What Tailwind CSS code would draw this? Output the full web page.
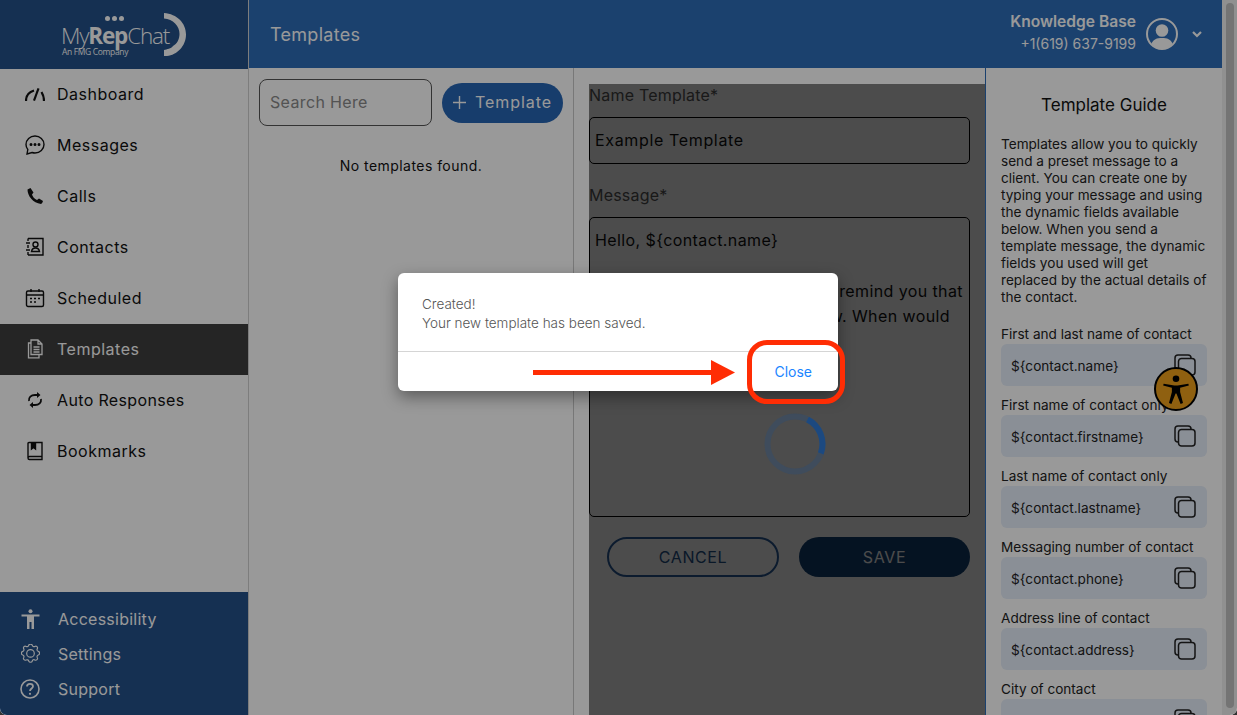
<!doctype html>
<html>
<head>
<meta charset="utf-8">
<script src="https://cdn.jsdelivr.net/npm/@tailwindcss/browser@4"></script>
</head>
<body class="w-[1237px] h-[715px] overflow-hidden bg-[#333] font-['Inter',sans-serif] text-black">
<div class="relative w-[1237px] h-[715px] overflow-hidden flex bg-white rounded-b-[7px]">
  <!-- sidebar -->
  <aside class="w-[249px] h-full shrink-0 flex flex-col bg-white border-r border-[#d0d0d0] font-['Inter',sans-serif]">
    <div class="h-[69px] shrink-0 bg-[#235089] flex items-center justify-center">
      <div class="relative w-[126px] h-[46px] text-white">
        <div class="absolute left-[0px] top-[12px] text-[22.5px] leading-[24px] tracking-[-1.2px] font-['Open_Sans',sans-serif] font-light whitespace-nowrap">My<span class="font-bold">Rep</span>Chat</div>
        <div class="absolute left-[1px] top-[35px] text-[8.5px] leading-[10px] tracking-[-0.35px] font-['Open_Sans',sans-serif] whitespace-nowrap">An FMG Company</div>
        <div class="absolute left-[44px] top-[4px] flex gap-[2px]"><span class="w-[5px] h-[5px] rounded-full bg-white"></span><span class="w-[5px] h-[5px] rounded-full bg-white"></span><span class="w-[5px] h-[5px] rounded-full bg-white"></span></div>
        <svg class="absolute left-[102px] top-[0px]" width="24" height="46" viewBox="0 0 24 46"><path d="M1 1 C14 2 23 11 23 22.5 C23 34 14 43 4 44 L1 44 L1 38 C4 37 8 37 10 34 C14 32 16.5 27 16.5 22 C16.5 14 10 7 1 6.5 Z" fill="#fff"/></svg>
      </div>
    </div>
    <nav class="flex-1 flex flex-col text-[16px] tracking-[0.5px]">
      <a class="h-[51px] pb-[2px] flex items-center pl-[25px] gap-[12px] text-[#111]"><svg class="w-[20px] h-[20px]" viewBox="0 0 20 20" fill="none" stroke="#111" stroke-width="2.2"><path d="M1 17 C1 12 4 8 9 6.5 M16.5 8 C18 10.5 19 13.5 19 17"/><path d="M12.5 4 L14.5 4.8 L10 17 L8 16.2 Z" fill="#111" stroke="none"/></svg><span>Dashboard</span></a>
      <a class="h-[51px] pb-[2px] flex items-center pl-[25px] gap-[12px] text-[#111]"><svg class="w-[20px] h-[20px]" viewBox="0 0 20 20" fill="none" stroke="#111" stroke-width="1.4"><path d="M10 1 C5 1 1 4.8 1 9.5 C1 11.5 1.7 13.2 2.8 14.5 L2 19 L7 17.5 C8 17.8 9 18 10 18 C15 18 19 14.2 19 9.5 C19 4.8 15 1 10 1 Z"/><circle cx="6" cy="9.5" r=".8" fill="#111"/><circle cx="10" cy="9.5" r=".8" fill="#111"/><circle cx="14" cy="9.5" r=".8" fill="#111"/></svg><span>Messages</span></a>
      <a class="h-[51px] pb-[2px] flex items-center pl-[25px] gap-[12px] text-[#111]"><svg class="w-[20px] h-[20px]" viewBox="0 0 20 20" fill="#111"><path d="M5.5 2 L2.5 3.5 C2.5 10 8 17 16 18 C17 17.5 17.5 16.5 18 15 L14 12.5 L12 14 C9.5 13 7.5 10.5 7 8.5 L8.5 6.5 Z"/></svg><span>Calls</span></a>
      <a class="h-[51px] pb-[2px] flex items-center pl-[25px] gap-[12px] text-[#111]"><svg class="w-[20px] h-[20px]" viewBox="0 0 20 20" fill="none" stroke="#111" stroke-width="1.4"><path d="M3 1.5 H18 V18 H3 M3 1.5 V4 M3 8 V11 M3 15 V18 M1 6 H5 M1 13 H5"/><circle cx="10.5" cy="7.5" r="2.5"/><path d="M6.5 14.5 C7 11.5 9 11 10.5 11 C12 11 14 11.5 14.5 14.5 Z"/></svg><span>Contacts</span></a>
      <a class="h-[51px] pb-[2px] flex items-center pl-[25px] gap-[12px] text-[#111]"><svg class="w-[20px] h-[20px]" viewBox="0 0 20 20" fill="none" stroke="#111" stroke-width="1.4"><rect x="1.5" y="3" width="17" height="15.5" rx="1.5"/><path d="M1.5 7 H18.5 M6 1 V4 M14 1 V4"/><path d="M5 10.5 H7 M9 10.5 H11 M13 10.5 H15 M5 14 H7 M9 14 H11" stroke-width="1.6"/></svg><span>Scheduled</span></a>
      <a class="h-[51px] pb-[2px] flex items-center pl-[25px] gap-[12px] bg-[#3f3f3f] text-white"><svg class="w-[20px] h-[20px]" viewBox="0 0 20 20" fill="none" stroke="#fff" stroke-width="1.3"><path d="M6 1 H13 L17 5 V15.5 H6 Z M13 1 V5 H17 M8.5 8 H14.5 M8.5 10.5 H14.5 M8.5 13 H14.5"/><path d="M6 4 H3.5 V18.8 H14 V15.5"/></svg><span>Templates</span></a>
      <a class="h-[51px] pb-[2px] flex items-center pl-[25px] gap-[12px] text-[#111]"><svg class="w-[20px] h-[20px]" viewBox="0 0 20 20" fill="none" stroke="#111" stroke-width="1.8"><path d="M4 11 C3.5 7.5 6 5 10 5 H13 M16 9 C16.5 12.5 14 15 10 15 H7"/><path d="M12 2 L15.5 5 L12 8 Z M8 12 L4.5 15 L8 18 Z" fill="#111" stroke="none"/></svg><span class="tracking-[0.35px]">Auto Responses</span></a>
      <a class="h-[51px] pb-[2px] flex items-center pl-[25px] gap-[12px] text-[#111]"><svg class="w-[20px] h-[20px]" viewBox="0 0 20 20" fill="none" stroke="#111" stroke-width="1.4"><path d="M3 17 V2.5 C3 2 3.4 1.5 4 1.5 H17 V18.5 H4.5 C3.6 18.5 3 17.9 3 17 C3 16 3.6 15.5 4.5 15.5 H17"/><path d="M6.5 1.5 V8 L8.5 6.5 L10.5 8 V1.5" fill="#111"/></svg><span>Bookmarks</span></a>
    </nav>
    <div class="h-[123px] shrink-0 bg-[#235089] text-white text-[16px] tracking-[0.25px] flex flex-col pt-[9px]">
      <a class="h-[35px] flex items-center pl-[21px] gap-[18px]"><svg class="w-[19px] h-[20px]" viewBox="0 0 19 20" fill="#fff"><circle cx="9.5" cy="2.3" r="2"/><path d="M0.5 5.5 H18.5 V7.5 H13 V20 H10.5 V13 H8.5 V20 H6 V7.5 H0.5 Z"/></svg><span>Accessibility</span></a>
      <a class="h-[35px] flex items-center pl-[21px] gap-[18px]"><svg class="w-[19px] h-[19px]" viewBox="3 3.5 18 18" fill="none" stroke="#fff" stroke-width="1.1"><path d="M10.3 3.2c.4-1.6 2.9-1.6 3.4 0 .3 1 1.4 1.5 2.4 1 1.5-.9 3.2.8 2.3 2.3-.5 1-.1 2.1 1 2.4 1.6.4 1.6 2.9 0 3.4-1 .3-1.5 1.4-1 2.4.9 1.5-.8 3.2-2.3 2.3-1-.5-2.1-.1-2.4 1-.4 1.6-2.9 1.6-3.4 0-.3-1-1.4-1.5-2.4-1-1.5.9-3.2-.8-2.3-2.3.5-1 .1-2.1-1-2.4-1.6-.4-1.6-2.9 0-3.4 1-.3 1.5-1.4 1-2.4-.9-1.5.8-3.2 2.3-2.3 1 .5 2.1.1 2.4-1z" transform="translate(0 1.6)"/><circle cx="12" cy="12.4" r="3.6"/></svg><span>Settings</span></a>
      <a class="h-[35px] flex items-center pl-[21px] gap-[18px]"><svg class="w-[20px] h-[20px] -ml-[1px]" viewBox="0 0 20 20" fill="none" stroke="#fff" stroke-width="1.6"><circle cx="10" cy="10" r="9"/><path d="M7 7.5 C7 5.5 8.5 4.8 10 4.8 C11.5 4.8 13 5.7 13 7.3 C13 9.5 10 9.5 10 12" stroke-width="1.8"/><circle cx="10" cy="14.8" r="1.1" fill="#fff" stroke="none"/></svg><span>Support</span></a>
    </div>
  </aside>

  <!-- main -->
  <main class="flex-1 min-w-0 flex flex-col">
    <header class="h-[68px] shrink-0 bg-[#2e6db8] text-white flex items-center justify-between pl-[21px] pr-[20px]">
      <h1 class="text-[18px] tracking-[0.3px] pt-[1px]">Templates</h1>
      <div class="flex items-center">
        <div class="text-right -mt-[3px]">
          <div class="text-[15.6px] leading-[22px] font-semibold">Knowledge Base</div>
          <div class="text-[14px] leading-[22px] tracking-[0px]">+1(619) 637-9199</div>
        </div>
        <svg class="ml-[10px] w-[32px] h-[32px]" viewBox="0 0 32 32"><circle cx="16" cy="16" r="15" fill="none" stroke="#fff" stroke-width="2"/><circle cx="16" cy="12.5" r="6.3" fill="#fff"/><path d="M5.5 26 C7 21 11 20 16 20 C21 20 25 21 26.5 26 C23.5 29.5 19.5 31 16 31 C12.5 31 8.5 29.5 5.5 26 Z" fill="#fff"/></svg>
        <svg class="ml-[14px] w-[10px] h-[7px]" viewBox="0 0 10 7" fill="none" stroke="#fff" stroke-width="2.2"><path d="M1 1 L5 5 L9 1"/></svg>
      </div>
    </header>
    <div class="flex-1 min-h-0 flex">
      <!-- list -->
      <section class="w-[325px] shrink-0 border-r border-[#c8c8c8] flex flex-col px-[10px]">
        <div class="flex items-center mt-[11px] gap-[10px]">
          <input class="w-[173px] h-[47px] pb-[2px] rounded-[8px] border border-[#555] px-[10px] text-[16px] tracking-[0.35px] placeholder:text-[#8a8a8a] bg-white" placeholder="Search Here">
          <button class="w-[121px] h-[40px] pb-[1px] rounded-full bg-[#2766b4] text-white flex items-center justify-center gap-[9px] text-[16px] tracking-[0.95px]"><svg class="w-[13px] h-[13px]" viewBox="0 0 13 13" stroke="#fff" stroke-width="1.4"><path d="M6.5 0 V13 M0 6.5 H13"/></svg>Template</button>
        </div>
        <p class="mt-[30px] text-center text-[14px] leading-[20px] tracking-[0.45px] text-[#111]">No templates found.</p>
      </section>
      <!-- form -->
      <section class="w-[412px] shrink-0 relative border-r border-[#2e6db8]">
        <div class="pl-[15px] pr-[15px]">
          <label class="block text-[16px] leading-[24px] tracking-[0.2px] mt-[15px] text-[#555]">Name Template*</label>
          <div class="mt-[10px] h-[47px] pb-[1px] border border-black rounded-[5px] flex items-center px-[5px] text-[16px] tracking-[0.65px] text-[#111]">Example Template</div>
          <label class="block text-[16px] leading-[24px] tracking-[0.2px] mt-[19px] text-[#555]">Message*</label>
          <div class="mt-[10px] h-[300px] border border-black rounded-[5px] px-[5px] pt-[10px] text-[16px] leading-[25.5px] tracking-[0.4px] text-[#111]">
            <div>Hello, ${contact.name}</div>
            <div class="h-[25px]"></div>
            <div class="text-right pr-[1px] whitespace-nowrap">remind you that</div>
            <div class="text-right pr-[14px] whitespace-nowrap">w. When would</div>
          </div>
          <div class="mt-[20px] flex justify-between pl-[18px]">
            <button class="w-[172px] h-[40px] rounded-full border-2 border-[#2a5c9a] text-[#235089] text-[16px] tracking-[0.6px]">CANCEL</button>
            <button class="w-[171px] h-[40px] rounded-full bg-[#134072] text-white text-[16px] tracking-[0.6px]">SAVE</button>
          </div>
        </div>
        <!-- loading veil -->
        <div class="absolute left-[15px] right-0 top-[16px] bottom-0 bg-black/50">
          <svg class="absolute left-[175px] top-[329px]" width="62" height="62" viewBox="0 0 62 62" fill="none"><circle cx="31" cy="31" r="27.5" stroke="#697f99" stroke-width="6"/><path d="M43.5 6.5 A27.5 27.5 0 0 1 56.8 40.4" stroke="#307bd5" stroke-width="6"/></svg>
        </div>
      </section>
      <!-- guide -->
      <section class="flex-1 min-w-0 pl-[15px] pr-[15px] text-[13.6px] leading-[17px] text-[#222] overflow-hidden">
        <h2 class="text-[17px] leading-[24px] text-center text-[#111] mt-[25px] mb-[19px]">Template Guide</h2>
        <p class="mb-[19px]">Templates allow you to quickly send a preset message to a client. You can create one by typing your message and using the dynamic fields available below. When you send a template message, the dynamic fields you used will get replaced by the actual details of the contact.</p>
        <div class="flex flex-col gap-[10px]">
          <div><div class="h-[19px] pt-[1px] whitespace-nowrap">First and last name of contact</div><div class="h-[42px] rounded-[6px] bg-[#e6eefa] flex items-center justify-between pl-[10px] pr-[11px]"><span class="pt-[2px]">${contact.name}</span><svg class="w-[22px] h-[22px]" viewBox="0 0 22 22" fill="none" stroke="#222" stroke-width="1.5"><path d="M4 17 C2 17 1 16 1 14 V4 C1 2 2 1 4 1 H14 C16 1 17 2 17 4"/><rect x="4.5" y="4.5" width="16.5" height="16.5" rx="3"/></svg></div></div>
          <div><div class="h-[19px] pt-[1px] whitespace-nowrap">First name of contact only</div><div class="h-[42px] rounded-[6px] bg-[#e6eefa] flex items-center justify-between pl-[10px] pr-[11px]"><span class="pt-[2px]">${contact.firstname}</span><svg class="w-[22px] h-[22px]" viewBox="0 0 22 22" fill="none" stroke="#222" stroke-width="1.5"><path d="M4 17 C2 17 1 16 1 14 V4 C1 2 2 1 4 1 H14 C16 1 17 2 17 4"/><rect x="4.5" y="4.5" width="16.5" height="16.5" rx="3"/></svg></div></div>
          <div><div class="h-[19px] pt-[1px] whitespace-nowrap">Last name of contact only</div><div class="h-[42px] rounded-[6px] bg-[#e6eefa] flex items-center justify-between pl-[10px] pr-[11px]"><span class="pt-[2px]">${contact.lastname}</span><svg class="w-[22px] h-[22px]" viewBox="0 0 22 22" fill="none" stroke="#222" stroke-width="1.5"><path d="M4 17 C2 17 1 16 1 14 V4 C1 2 2 1 4 1 H14 C16 1 17 2 17 4"/><rect x="4.5" y="4.5" width="16.5" height="16.5" rx="3"/></svg></div></div>
          <div><div class="h-[19px] pt-[1px] whitespace-nowrap">Messaging number of contact</div><div class="h-[42px] rounded-[6px] bg-[#e6eefa] flex items-center justify-between pl-[10px] pr-[11px]"><span class="pt-[2px]">${contact.phone}</span><svg class="w-[22px] h-[22px]" viewBox="0 0 22 22" fill="none" stroke="#222" stroke-width="1.5"><path d="M4 17 C2 17 1 16 1 14 V4 C1 2 2 1 4 1 H14 C16 1 17 2 17 4"/><rect x="4.5" y="4.5" width="16.5" height="16.5" rx="3"/></svg></div></div>
          <div><div class="h-[19px] pt-[1px] whitespace-nowrap">Address line of contact</div><div class="h-[42px] rounded-[6px] bg-[#e6eefa] flex items-center justify-between pl-[10px] pr-[11px]"><span class="pt-[2px]">${contact.address}</span><svg class="w-[22px] h-[22px]" viewBox="0 0 22 22" fill="none" stroke="#222" stroke-width="1.5"><path d="M4 17 C2 17 1 16 1 14 V4 C1 2 2 1 4 1 H14 C16 1 17 2 17 4"/><rect x="4.5" y="4.5" width="16.5" height="16.5" rx="3"/></svg></div></div>
          <div><div class="h-[19px] pt-[1px] whitespace-nowrap">City of contact</div><div class="h-[42px] rounded-[6px] bg-[#e6eefa] flex items-center justify-end pl-[10px] pr-[11px]"><svg class="w-[22px] h-[22px]" viewBox="0 0 22 22" fill="none" stroke="#222" stroke-width="1.5"><path d="M4 17 C2 17 1 16 1 14 V4 C1 2 2 1 4 1 H14 C16 1 17 2 17 4"/><rect x="4.5" y="4.5" width="16.5" height="16.5" rx="3"/></svg></div></div>
        </div>
      </section>
    </div>
  </main>
  <!-- scrollbar -->
  <div class="w-[15px] shrink-0 bg-[#f1f1f1] flex justify-center pt-[3px]"><div class="w-[8px] h-[705px] rounded-full bg-[#c1c1c1]"></div></div>

  <!-- accessibility widget -->
  <div class="absolute left-[1154px] top-[367px] w-[44px] h-[44px] rounded-full border-2 border-black bg-[#eea01b] flex items-center justify-center">
    <svg width="28" height="31" viewBox="0 0 34 36" fill="#000"><circle cx="17" cy="5" r="4"/><path d="M2 11 L15 13 H19 L32 11 L32.6 13.2 L22 16 L22 21 L25.5 34.5 L22.6 35.5 L17.5 23 H16.5 L11.4 35.5 L8.5 34.5 L12 21 L12 16 L1.4 13.2 Z"/></svg>
  </div>

  <!-- dialog backdrop -->
  <div class="absolute inset-0 bg-black/40"></div>
  <div class="absolute left-[398px] top-[273px] w-[440px] h-[118px] bg-white rounded-[6px] shadow-[0_6px_16px_rgba(0,0,0,0.4)] font-['Inter',sans-serif] text-[#555]">
    <div class="h-[79px] border-b border-[#d5d5d5] pl-[24px] pt-[22px] text-[13.5px] leading-[19px] font-light"><div>Created!</div><div>Your new template has been saved.</div></div>
    <div class="h-[39px] flex items-center justify-end pr-[26px] text-[14px] text-[#1a85ff]">Close</div>
  </div>
  <!-- annotation -->
  <div class="absolute left-[533px] top-[370px] w-[180px] h-[5px] bg-[#ff2d04]"></div>
  <svg class="absolute left-[710px] top-[360px]" width="25" height="25" viewBox="0 0 25 25"><path d="M1 0 L25 12.5 L1 25 Z" fill="#ff2d04"/></svg>
  <div class="absolute left-[747px] top-[340px] w-[98px] h-[64px] rounded-[20px] border-[5px] border-[#ff2d04]"></div>
</div>
</body>
</html>
